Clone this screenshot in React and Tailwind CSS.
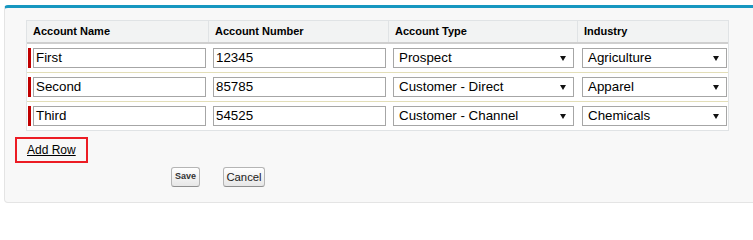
import React from "react";

const rows = [
  { name: "First", number: "12345", type: "Prospect", industry: "Agriculture" },
  { name: "Second", number: "85785", type: "Customer - Direct", industry: "Apparel" },
  { name: "Third", number: "54525", type: "Customer - Channel", industry: "Chemicals" },
];

const Arrow = () => (
  <svg width="6" height="5" viewBox="0 0 6 5" className="shrink-0">
    <path d="M0 0 H6 L3 5 Z" fill="#111" />
  </svg>
);

const FakeSelect = ({ value, width }) => (
  <div
    className={`flex h-[20px] items-center justify-between border border-[#a6a6a6] bg-white pl-[5px] pr-[7px] text-[13.33px] leading-none text-black ${width}`}
  >
    <span>{value}</span>
    <Arrow />
  </div>
);

const TextBox = ({ value, width }) => (
  <div
    className={`flex h-[20px] items-center border border-[#a6a6a6] bg-white pl-[2px] text-[13.33px] leading-none text-black ${width}`}
  >
    {value}
  </div>
);

export default function App() {
  return (
    <div className="w-[753px] h-[207px] overflow-hidden bg-white font-['Liberation_Sans',Arial,sans-serif]">
      {/* Panel */}
      <div className="ml-[4px] mt-[5px] w-[800px] rounded-t-[4px] rounded-b-[4px] border border-t-[3px] border-[#e4e4e4] border-t-[#1797c0] bg-[#f8f8f8] pt-[12px] pb-[15px]">
        {/* Table */}
        <div className="ml-[21px] w-[703px] border border-[#e0e3e5] bg-white">
          {/* Header */}
          <div className="grid grid-cols-[181px_180px_189px_151px] border-b-[2px] border-[#cfcfcf] bg-[#f2f3f3] text-[11px] font-bold text-black">
            <div className="flex h-[21px] items-center pl-[6px]">Account Name</div>
            <div className="flex h-[21px] items-center border-l border-[#e0e3e5] pl-[6px]">Account Number</div>
            <div className="flex h-[21px] items-center border-l border-[#e0e3e5] pl-[6px]">Account Type</div>
            <div className="flex h-[21px] items-center border-l border-[#e0e3e5] pl-[6px]">Industry</div>
          </div>

          {/* Rows */}
          {rows.map((r, i) => (
            <div
              key={r.name}
              className={`grid grid-cols-[181px_180px_189px_151px] py-[4px] ${
                i < rows.length - 1 ? "border-b border-[#e3deb8]" : ""
              }`}
            >
              <div className="flex items-center pl-[1px]">
                <div className="h-[20px] w-[3px] bg-[#c00000]"></div>
                <div className="ml-[2px]">
                  <TextBox value={r.name} width="w-[173px]" />
                </div>
              </div>
              <div className="pl-[5px]">
                <TextBox value={r.number} width="w-[173px]" />
              </div>
              <div className="pl-[5px]">
                <FakeSelect value={r.type} width="w-[181px]" />
              </div>
              <div className="pl-[5px]">
                <FakeSelect value={r.industry} width="w-[145px]" />
              </div>
            </div>
          ))}
        </div>

        {/* Add Row */}
        <div className="ml-[10px] mt-[6px] flex h-[26px] w-[73px] items-center border-[2px] border-[#ec1c24] pl-[10px]">
          <a href="#" className="text-[12px] text-black underline">
            Add Row
          </a>
        </div>

        {/* Buttons */}
        <div className="mt-[4px] flex h-[20px] items-stretch pl-[166px]">
          <button className="w-[29px] rounded-[3px] border border-[#b5b5b5] border-b-[#8f8f8f] bg-gradient-to-b from-white to-[#e7e7e7] text-[9px] font-bold text-[#333]">
            Save
          </button>
          <button className="ml-[23px] w-[42px] rounded-[3px] border border-[#b5b5b5] border-b-[#8f8f8f] bg-gradient-to-b from-white to-[#e7e7e7] text-[11.3px] text-[#222]">
            Cancel
          </button>
        </div>
      </div>
    </div>
  );
}
